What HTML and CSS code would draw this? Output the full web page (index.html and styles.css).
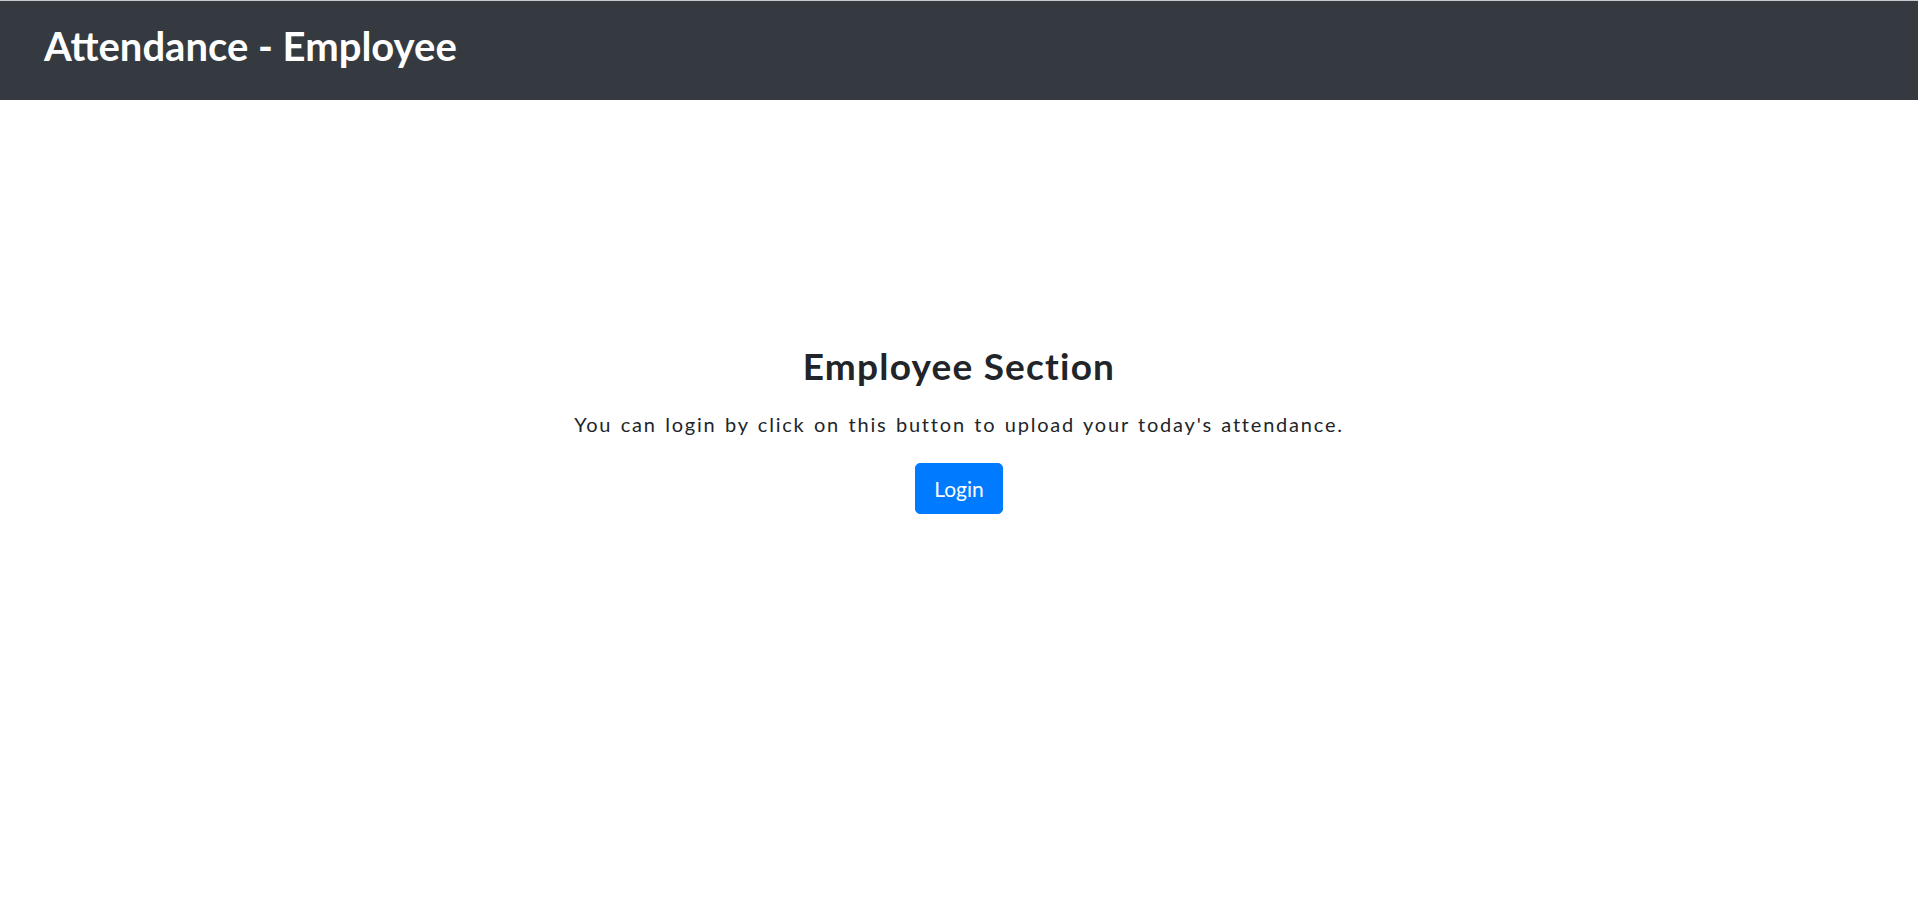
FILE: index.html
```html
<!DOCTYPE html>
<html lang="en">
<head>
<meta charset="utf-8">
<title>Attendance - Employee</title>
<link rel="stylesheet" href="styles.css">
</head>
<body>
<header class="navbar">
  <h1 class="navbar-title">Attendance - Employee</h1>
</header>
<main class="section">
  <h2 class="section-title">Employee Section</h2>
  <p class="section-text">You can login by click on this button to upload your today's attendance.</p>
  <button class="btn-login" type="button">Login</button>
</main>
</body>
</html>
```

FILE: styles.css
```css
html, body {
  margin: 0;
  padding: 0;
  background: #ffffff;
  font-family: "Lato", "Liberation Sans", sans-serif;
  color: #212529;
}

.navbar {
  background: #343a40;
  border-top: 1px solid #c9cacc;
  padding: 21px 44px 30px;
  height: 48px;
}

.navbar-title {
  margin: 0;
  font-size: 40px;
  line-height: 48px;
  font-weight: 700;
  color: #ffffff;
}

.section {
  display: flex;
  flex-direction: column;
  align-items: center;
  padding-top: 245px;
}

.section-title {
  margin: 0;
  font-size: 37px;
  line-height: 42px;
  font-weight: 700;
  letter-spacing: 1.2px;
  color: #212529;
}

.section-text {
  margin: 22px 0 0;
  font-size: 20px;
  line-height: 30px;
  letter-spacing: 1.8px;
  word-spacing: 1.5px;
  color: #212529;
}

.btn-login {
  margin-top: 24px;
  font-family: inherit;
  font-size: 21px;
  line-height: 31px;
  padding: 9px 18px;
  border: 1px solid #007bff;
  border-radius: 5px;
  background: #007bff;
  color: #ffffff;
  cursor: pointer;
}
```
